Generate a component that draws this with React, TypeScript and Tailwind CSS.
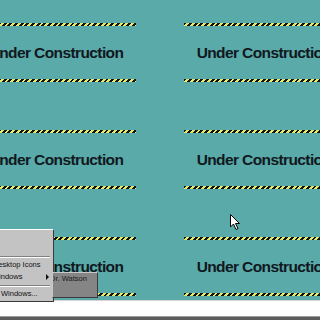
import React from "react";

// franja de obra: diagonales negras y amarillas
function Stripe() {
  return (
    <div className="h-[3px] w-full bg-[repeating-linear-gradient(135deg,#111_0px,#111_2px,#e4ec6a_2px,#e4ec6a_4px)]" />
  );
}

function Cell() {
  return (
    <div className="flex flex-col">
      <Stripe />
      <div className="h-[53px] flex items-center justify-center">
        <span className="font-['Liberation_Sans',Arial,sans-serif] font-bold text-[15.5px] tracking-[-0.6px] text-[#101820] whitespace-nowrap">
          Under Construction
        </span>
      </div>
      <Stripe />
    </div>
  );
}

function Cursor() {
  return (
    <svg width="12" height="18" viewBox="0 0 12 18" className="absolute left-[230px] top-[214px]">
      <path d="M0.5 0.5 L0.5 13 L3.5 10 L6 15.5 L8 14.5 L5.5 9.5 L9.5 9.5 Z" fill="#fff" stroke="#000" strokeWidth="1" />
    </svg>
  );
}

export default function App() {
  const cells = Array.from({ length: 6 });

  return (
    <div className="w-[320px] h-[320px] relative overflow-hidden bg-[#5aaaa9] flex flex-col font-['Liberation_Sans',Arial,sans-serif]">
      {/* --- rejilla de carteles --- */}
      <div className="h-[300px] overflow-hidden">
        <div className="ml-[-24px] pt-[23px] grid grid-cols-[160px_160px] gap-x-[48px] gap-y-[48px] w-[400px]">
          {cells.map((_, i) => (
            <Cell key={i} />
          ))}
        </div>
      </div>

      {/* --- barra inferior --- */}
      <div className="h-[1px] bg-[#d4d4d4]" />
      <div className="h-[15px] bg-white" />
      <div className="flex-1 bg-[#5c5c5c] border-t border-[#9a9a9a]" />

      {/* --- menú contextual --- */}
      <div className="absolute left-0 top-[229px] w-[54px] h-[73px] bg-[#c3c3c3] border-t border-t-white border-r border-r-[#3a3a3a] border-b border-b-[#3a3a3a] text-[7.5px] text-[#111] leading-[8px]">
        <div className="h-[26px]" />
        <div className="h-[1px] bg-[#808080] mr-[3px]" />
        <div className="h-[1px] bg-white mr-[3px]" />
        <div className="h-[3px]" />
        <div className="ml-[-7px] whitespace-nowrap">Desktop Icons</div>
        <div className="h-[4px]" />
        <div className="flex items-center justify-between pr-[4px]">
          <span className="ml-[-8px] whitespace-nowrap">Windows</span>
          <span className="w-0 h-0 border-y-[3px] border-y-transparent border-l-[3px] border-l-[#111]" />
        </div>
        <div className="h-[4px]" />
        <div className="h-[1px] bg-[#808080] mr-[3px]" />
        <div className="h-[1px] bg-white mr-[3px]" />
        <div className="h-[3px]" />
        <div className="ml-[1px] whitespace-nowrap">Windows...</div>
      </div>

      {/* --- submenú --- */}
      <div className="absolute left-[52px] top-[272px] w-[46px] h-[26px] bg-[#858585] border-t border-l border-t-[#c8c8c8] border-l-[#c8c8c8] border-r border-b border-r-[#3a3a3a] border-b-[#3a3a3a] overflow-hidden">
        <div className="ml-[-3px] mt-[2px] text-[7.5px] leading-[8px] text-[#1a1a1a] whitespace-nowrap">Dr. Watson</div>
      </div>

      <Cursor />
    </div>
  );
}
